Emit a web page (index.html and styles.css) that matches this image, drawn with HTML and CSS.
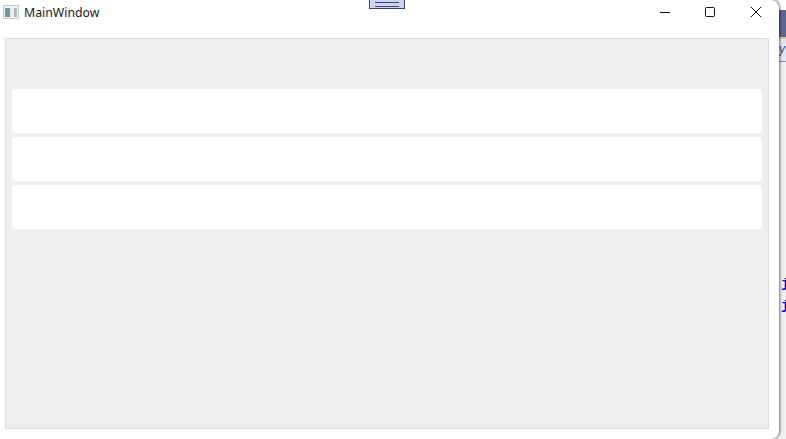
FILE: index.html
```html
<!DOCTYPE html>
<html lang="en">
<head>
    <meta charset="UTF-8">
    <title>MainWindow</title>
    <link rel="stylesheet" href="styles.css">
</head>
<body>
    <div class="window">
        <div class="titlebar">
            <svg class="app-icon" width="16" height="16" viewBox="0 0 16 16">
                <rect x="0.5" y="1.5" width="15" height="13" fill="#f2f4f4" stroke="#c4c9cc"/>
                <rect x="2" y="4" width="5" height="9" fill="#6f9a96"/>
                <rect x="7" y="4" width="4" height="9" fill="#e6edef"/>
                <rect x="11" y="4" width="3" height="9" fill="#a9bcc2"/>
            </svg>
            <span class="title">MainWindow</span>
            <div class="window-buttons">
                <button class="win-btn">
                    <svg width="12" height="12" viewBox="0 0 12 12"><path d="M2 6.5H12" stroke="#111" fill="none"/></svg>
                </button>
                <button class="win-btn">
                    <svg width="12" height="12" viewBox="0 0 12 12"><rect x="1.5" y="1.5" width="9" height="9" rx="1" stroke="#111" fill="none"/></svg>
                </button>
                <button class="win-btn">
                    <svg width="12" height="12" viewBox="0 0 12 12"><path d="M1 1L11 11M11 1L1 11" stroke="#111" fill="none"/></svg>
                </button>
            </div>
        </div>
        <div class="panel">
            <div class="row"></div>
            <div class="row"></div>
            <div class="row"></div>
        </div>
    </div>

    <div class="side">
        <div class="side-top"></div>
        <div class="side-band"></div>
        <div class="side-tab">y</div>
        <div class="side-code">
            <span>j</span>
            <span>j</span>
        </div>
    </div>

    <div class="drag-handle"><span class="drag-lines"></span></div>
</body>
</html>
```

FILE: styles.css
```css
html, body {
    height: 100%;
}

body {
    margin: 0;
    width: 786px;
    height: 439px;
    overflow: hidden;
    display: flex;
    background-color: #f0f0f0;
    font-family: "Noto Sans", "Liberation Sans", sans-serif;
}

/* Window */
.window {
    width: 779px;
    height: 439px;
    flex-shrink: 0;
    box-sizing: border-box;
    padding-bottom: 10px;
    display: flex;
    flex-direction: column;
    background-color: #fff;
    border-radius: 0 8px 8px 0;
    box-shadow: 1px 0 3px rgba(0, 0, 0, 0.55);
    position: relative;
    z-index: 1;
}

.titlebar {
    height: 24px;
    flex-shrink: 0;
    display: flex;
    align-items: center;
    padding-left: 3px;
}

.app-icon {
    margin-right: 5px;
}

.title {
    font-size: 12.3px;
    color: #1a1a1a;
}

.window-buttons {
    margin-left: auto;
    display: flex;
    align-self: flex-start;
}

.win-btn {
    width: 46px;
    height: 24px;
    padding: 0;
    border: none;
    background: none;
    display: flex;
    align-items: center;
    justify-content: center;
}

/* Main panel */
.panel {
    flex: 1;
    margin: 14px 10px 0 5px;
    padding: 50px 6px 0;
    border: 1px solid #dcdcdc;
    background-color: #eeeeee;
    display: flex;
    flex-direction: column;
    gap: 4px;
}

.row {
    height: 44px;
    background-color: #fff;
    border-radius: 4px;
}

/* What shows behind the window on the right */
.side {
    flex: 1;
    display: flex;
    flex-direction: column;
}

.side-top {
    height: 10px;
    background-color: #fff;
}

.side-band {
    height: 27px;
    background-color: #5a6593;
    border-bottom: 2px solid #e2c48c;
}

.side-tab {
    height: 22px;
    background-color: #dfe8f5;
    border-bottom: 1px solid #8a93a8;
    font-family: "Liberation Sans", sans-serif;
    font-size: 12px;
    font-style: italic;
    line-height: 20px;
    color: #3a4a80;
}

.side-code {
    padding-top: 214px;
    padding-left: 2px;
    display: flex;
    flex-direction: column;
    gap: 6px;
    font-family: "Liberation Mono", monospace;
    font-size: 13px;
    line-height: 16px;
    font-weight: bold;
    color: #0000e0;
}

/* Handle that overlaps the top edge */
.drag-handle {
    position: absolute;
    top: -1px;
    left: 369px;
    z-index: 2;
    width: 36px;
    height: 10px;
    box-sizing: border-box;
    display: flex;
    align-items: center;
    justify-content: center;
    border: 1px solid #3c4470;
    background-color: #cbd5f2;
}

.drag-lines {
    width: 24px;
    height: 3px;
    border-top: 1px solid #3c4470;
    border-bottom: 1px solid #3c4470;
}
```
